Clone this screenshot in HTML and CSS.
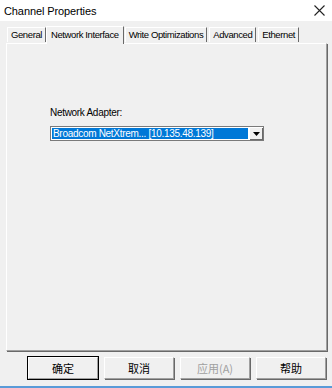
FILE: index.html
```html
<!DOCTYPE html>
<html lang="en">
<head>
    <meta charset="UTF-8">
    <title>Channel Properties</title>
    <link rel="stylesheet" href="styles.css">
</head>
<body>
    <div class="window">
        <div class="titlebar">
            <span class="title">Channel Properties</span>
            <svg class="close" width="11" height="11" viewBox="0 0 11 11">
                <path d="M0.5 0.5 L10.5 10.5 M10.5 0.5 L0.5 10.5" stroke="#222" stroke-width="1.1" fill="none"/>
            </svg>
        </div>
        <div class="content">
            <div class="tabs">
                <div class="tab">General</div>
                <div class="tab active">Network Interface</div>
                <div class="tab">Write Optimizations</div>
                <div class="tab">Advanced</div>
                <div class="tab">Ethernet</div>
            </div>
            <div class="panel">
                <div class="label">Network Adapter:</div>
                <div class="combo">
                    <div class="combo-value">Broadcom NetXtrem... [10.135.48.139]</div>
                    <div class="combo-arrow">
                        <svg width="7" height="4" viewBox="0 0 7 4"><path d="M0 0 H7 L3.5 4 Z" fill="#000"/></svg>
                    </div>
                </div>
            </div>
            <div class="actions">
                <button class="default">确定</button>
                <button>取消</button>
                <button disabled>应用(A)</button>
                <button>帮助</button>
            </div>
        </div>
    </div>
</body>
</html>
```

FILE: styles.css
```css
* {
    box-sizing: border-box;
}

html, body {
    margin: 0;
    padding: 0;
}

body {
    width: 332px;
    height: 388px;
    background: #f0f0f0;
    font-family: "Liberation Sans", Arial, sans-serif;
    font-size: 9.5px;
    letter-spacing: -0.3px;
    color: #000;
    overflow: hidden;
}

.window {
    height: 388px;
    border-bottom: 2px solid #5a9bd8;
    display: flex;
    flex-direction: column;
}

.titlebar {
    height: 21px;
    background: #fff;
    display: flex;
    align-items: center;
    justify-content: space-between;
    padding: 0 7px 0 4px;
    flex-shrink: 0;
}

.title {
    font-size: 11px;
    letter-spacing: -0.1px;
    color: #000;
}

.content {
    flex: 1;
    padding: 4px 5px 0 6px;
    display: flex;
    flex-direction: column;
}

.tabs {
    display: flex;
    align-items: flex-end;
    height: 18px;
    padding-left: 1px;
    position: relative;
    z-index: 1;
    letter-spacing: -0.4px;
}

.tab {
    height: 15px;
    line-height: 14px;
    padding: 0 3px;
    border-left: 1px solid #fff;
    border-top: 1px solid #fff;
    border-right: 1px solid #696969;
    margin-bottom: 1px;
    white-space: nowrap;
}

.tab + .tab {
    margin-left: 2px;
}

.tab.active {
    height: 18px;
    line-height: 15px;
    padding: 0 4px;
    margin: 0 -1px -1px 0;
    background: #f0f0f0;
}

.tab.active + .tab {
    margin-left: 2px;
}

.panel {
    height: 308px;
    flex-shrink: 0;
    border-left: 1px solid #fff;
    border-top: 1px solid #fff;
    border-right: 1px solid #a0a0a0;
    border-bottom: 1px solid #a0a0a0;
    box-shadow: 1px 1px 0 #696969;
    padding: 63px 0 0 43px;
}

.label {
    font-size: 10px;
    margin-bottom: 8px;
}

.combo {
    width: 214px;
    height: 15px;
    display: flex;
    background: #fff;
    border: 1px solid #7a7a7a;
}

.combo-value {
    flex: 1;
    margin: 1px;
    background: #0078d7;
    color: #fff;
    font-size: 10px;
    line-height: 11px;
    padding-left: 1px;
    white-space: nowrap;
    overflow: hidden;
}

.combo-arrow {
    width: 14px;
    background: #f0f0f0;
    border-left: 1px solid #fff;
    border-top: 1px solid #fff;
    box-shadow: inset -1px -1px 0 #696969;
    display: flex;
    align-items: center;
    justify-content: center;
}

.actions {
    display: flex;
    justify-content: flex-end;
    gap: 6px;
    padding: 6px 1px 0 0;
}

button {
    width: 70px;
    height: 22px;
    padding: 0;
    background: #f0f0f0;
    border: 1px solid #a0a0a0;
    border-left-color: #fff;
    border-top-color: #fff;
    box-shadow: 1px 1px 0 #696969;
    font-family: "Noto Sans CJK SC", sans-serif;
    font-size: 11px;
    letter-spacing: 0;
    color: #000;
}

button.default {
    outline: 1px solid #000;
}

button:disabled {
    color: #a0a0a0;
}
```
